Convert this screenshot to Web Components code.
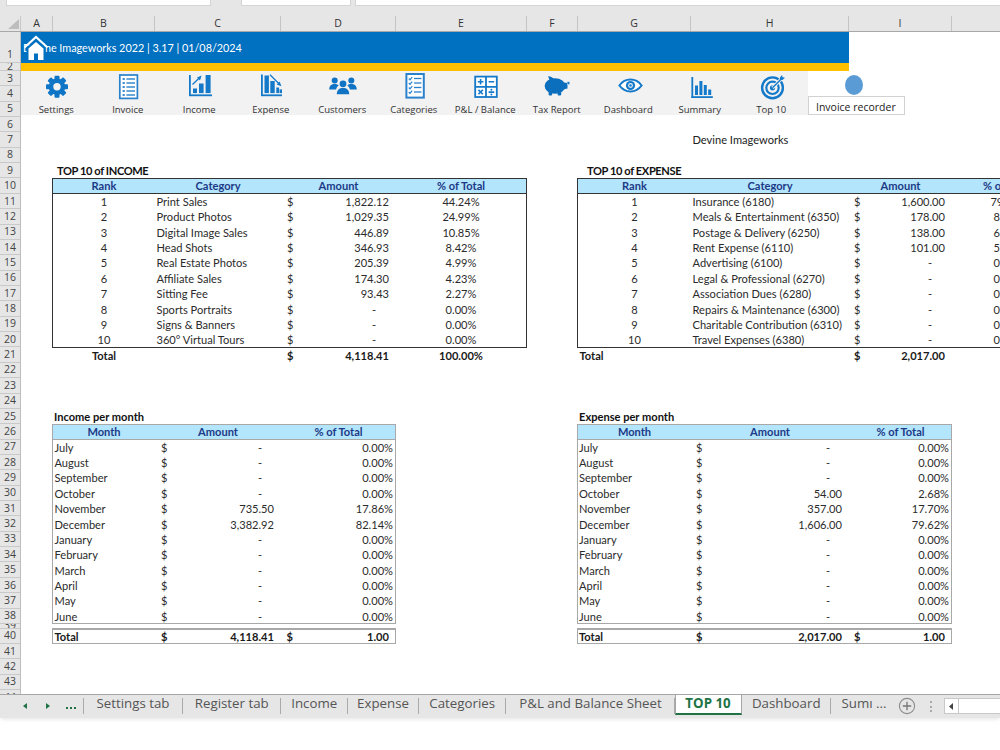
<!DOCTYPE html>
<html lang="en"><head><meta charset="utf-8"><title>TOP 10</title>
<style>
html,body{margin:0;padding:0;background:#fff;overflow:hidden}
</style></head><body>
<x-app>
  <x-formula-bar></x-formula-bar>
  <x-col-headers></x-col-headers>
  <x-sheet id="sheet">
    <x-banner style="grid-row:1;grid-column:1/9">Devine Imageworks 2022 | 3.17 | 01/08/2024</x-banner>
    <x-stripe style="grid-row:2;grid-column:1/9"></x-stripe>
    <x-toolbar style="grid-row:3/6;grid-column:1/-1"></x-toolbar>
    <x-note style="grid-row:7;grid-column:8;padding-left:1.5px">Devine Imageworks</x-note>
    <x-note bold caps style="grid-row:9;grid-column:2/4;padding-left:4px">TOP 10 of INCOME</x-note>
    <x-note bold caps style="grid-row:9;grid-column:7/9;padding-left:9px">TOP 10 of EXPENSE</x-note>
    <x-note bold style="grid-row:25;grid-column:2/4;padding-left:1px">Income per month</x-note>
    <x-note bold style="grid-row:25;grid-column:7/9;padding-left:1px">Expense per month</x-note>
  </x-sheet>
  <x-tabs></x-tabs>
</x-app>
<script>
const FONT = '"Lato","Open Sans",sans-serif';
const UI = '"Open Sans","Noto Sans",sans-serif';
const COLW = [32,102,126,115,131,51,113,158,103,110];

function shadow(el, html){ el.attachShadow({mode:'open'}).innerHTML = html; }

customElements.define('x-app', class extends HTMLElement{
  constructor(){super();shadow(this,`<style>:host{display:flex;flex-direction:column;width:1000px;height:750px;overflow:hidden;background:#fff;font-family:${FONT}}</style><slot></slot>`);}
});

customElements.define('x-formula-bar', class extends HTMLElement{
  constructor(){super();shadow(this,`<style>
  :host{display:block;height:16px;flex:none;background:#e6e6e6;box-sizing:border-box}
  .w{display:flex;height:5.5px;padding-left:6px;gap:0}
  i{display:block;background:#fff;border:solid #d4d4d4;border-width:0 1px 1px 1px;box-sizing:border-box}
  </style><div class="w"><i style="width:205px"></i><i style="width:110px;margin-left:30px"></i><i style="flex:1;margin-left:4px;border-right:0"></i></div>`);}
});

customElements.define('x-col-headers', class extends HTMLElement{
  constructor(){super();
    const names=['A','B','C','D','E','F','G','H','I',''];
    shadow(this,`<style>
    :host{display:flex;flex:none;height:16px;background:#e6e6e6;border-bottom:1px solid #a8a8a8;box-sizing:border-box;font:10.5px/15.5px ${UI};color:#333;overflow:hidden}
    .corner{width:21px;flex:none;position:relative;box-sizing:border-box;border-right:1px solid #c8c8c8}
    .corner svg{display:block;margin:3px 0 0 8px}
    .c{flex:none;text-align:center;box-sizing:border-box;border-right:1px solid #c4c4c4}
    </style><div class="corner"><svg width="11" height="10"><path d="M11 0V10H0Z" fill="#bdbdbd"/></svg></div>`+
    names.map((n,i)=>`<div class="c" style="width:${COLW[i]}px">${n}</div>`).join(''));}
});

customElements.define('x-sheet', class extends HTMLElement{
  constructor(){super();
    const rows=[[1,31],[2,7.98]];
    for(let r=3;r<=38;r++)rows.push([r,15.36]);
    rows.push([39,4.7]);
    for(let r=40;r<=44;r++)rows.push([r,15.36]);
    const tpl=rows.map(r=>r[1]+'px').join(' ');
    shadow(this,`<style>
    :host{display:flex;flex:none;height:662px;overflow:hidden;background:#fff}
    .heads{width:21px;flex:none;background:#e6e6e6;box-sizing:border-box;border-right:1px solid #bdbdbd;font:10.5px ${UI};color:#444}
    .r{box-sizing:border-box;border-bottom:1px solid #c9c9c9;display:flex;align-items:center;justify-content:center;overflow:hidden;line-height:15px}
    .r.one{align-items:flex-end;line-height:16px}
    .body{flex:none;width:${COLW.reduce((a,b)=>a+b)}px;display:grid;grid-template-columns:${COLW.map(w=>w+'px').join(' ')};grid-template-rows:${tpl};position:relative}
    </style><div class="heads">${rows.map(r=>`<div class="r${r[0]==1?' one':''}" style="height:${r[1]}px">${r[0]}</div>`).join('')}</div><div class="body"><slot></slot></div>`);}
});

customElements.define('x-banner', class extends HTMLElement{
  constructor(){super();shadow(this,`<style>
  :host{display:block;position:relative;background:#0070c0;color:#fff;font:10.8px/31px ${FONT};padding-left:2px;white-space:nowrap}
  svg{position:absolute;left:1.5px;top:2.5px}
  </style><slot></slot><svg width="26" height="26" viewBox="0 0 26 26"><path d="M1.5 12.5 13 2 24.5 12.5" fill="none" stroke="#fff" stroke-width="2.2"/><path d="M3.5 12.5 13 4.5l9.5 8V26h-19z" fill="#0070c0"/><path d="M5.5 13.5 13 7l7.5 6.5V25h-5.5v-6.5h-4V25H5.5z" fill="#fff"/></svg>`);}
});

customElements.define('x-stripe', class extends HTMLElement{
  constructor(){super();shadow(this,`<style>:host{display:block;background:#ffc000}</style>`);}
});

const ICONS={
 settings:`<g fill="#0f75c6"><circle cx="14" cy="14.7" r="8.3"/>${[0,45,90,135,180,225,270,315].map(a=>`<rect x="11.5" y="3.7" width="5" height="5" rx="1" transform="rotate(${a} 14 14.7)"/>`).join('')}</g><circle cx="14" cy="14.7" r="3.7" fill="#f2f2f2"/>`,
 invoice:`<rect x="5.8" y="3" width="17.6" height="23.4" fill="#fff" stroke="#2a82cc" stroke-width="1.7"/><g fill="#2a82cc">${[7,11,15,19,23].map(y=>`<rect x="8.6" y="${y-.9}" width="2.2" height="1.8"/><rect x="12.4" y="${y-.7}" width="8.6" height="1.4"/>`).join('')}</g>`,
 income:`<g fill="#1479c9"><rect x="3" y="3" width="1.8" height="21"/><rect x="3" y="22.4" width="23" height="1.8"/><rect x="7" y="16.5" width="4" height="4.6"/><rect x="13" y="11.5" width="4.6" height="9.6"/><rect x="19.6" y="3" width="5" height="18.1"/></g><path d="M6.5 12.5 13 6.2" stroke="#1479c9" stroke-width="1.3" fill="none"/><path d="M15.6 3.6 14 8.4 11 5.4z" fill="#1479c9"/>`,
 expense:`<g fill="#1479c9"><rect x="4" y="2.5" width="1.8" height="21.5"/><rect x="4" y="22.4" width="21" height="1.8"/><rect x="7.5" y="3.5" width="4.4" height="17.6"/><rect x="13.3" y="9" width="4.4" height="12.1"/><rect x="19.3" y="15.5" width="2.8" height="5.6"/><rect x="22.6" y="17.4" width="2.4" height="3.7"/></g><path d="M13 2.8 22 11.8" stroke="#1479c9" stroke-width="1.3" fill="none"/><path d="M24.4 14.2 19.6 12.6 22.6 9.6z" fill="#1479c9"/>`,
 customers:`<g fill="#1173c4"><circle cx="5.7" cy="8.6" r="3"/><circle cx="22.3" cy="8.6" r="3"/><path d="M.2 17.6c0-4 2.4-5.6 5.5-5.6 1.6 0 3 .4 4 1.4-1.4 1-2.3 2.4-2.6 4.2z"/><path d="M27.8 17.6c0-4-2.4-5.6-5.5-5.6-1.6 0-3 .4-4 1.4 1.4 1 2.3 2.4 2.6 4.2z"/><circle cx="14" cy="11.8" r="3.4"/><path d="M7.8 22.2c0-4.4 2.6-6.3 6.2-6.3s6.2 1.9 6.2 6.3z"/></g>`,
 categories:`<rect x="6.4" y="2" width="17.4" height="23.6" fill="#fff" stroke="#2a82cc" stroke-width="2"/><g fill="none" stroke="#2a82cc">${[6.5,11,15.5,20].map(y=>`<path d="M8.8 ${y}l1.2 1.3 2.2-2.6" stroke-width="1.2"/><path d="M14 ${y}h7.4" stroke-width="1.3"/>`).join('')}</g>`,
 pl:`<rect x="3.2" y="4.6" width="21.6" height="20.4" fill="#fff" stroke="#1479c9" stroke-width="1.8"/><path d="M14 4.6V25M3.2 14.8H24.8" stroke="#1479c9" stroke-width="1.8"/><g stroke="#1479c9" stroke-width="1.6" fill="none"><path d="M5.8 9.7h5.6M8.6 6.9v5.6M16.6 9.7h5.6M6.4 17.9l4.4 4.4M10.8 17.9l-4.4 4.4M16.6 20.1h5.6"/></g><circle cx="19.4" cy="17.8" r="1" fill="#1479c9"/><circle cx="19.4" cy="22.4" r="1" fill="#1479c9"/>`,
 piggy:`<g fill="#0b6fbd"><ellipse cx="12" cy="14" rx="10.4" ry="7.8"/><path d="M5 4.2c3 .2 5 1.5 6.4 3L6.8 10C6.6 8 6 6 5 4.2z"/><rect x="5.6" y="18" width="3.6" height="5.4" rx=".8"/><rect x="14.6" y="18" width="3.6" height="5.4" rx=".8"/><path d="M20 10.4 24.5 11v5.4l-4.5 1z"/></g><path d="M24 9.4h3l-.4 3.6h-2.6z" fill="#a9cce8"/><circle cx="25.4" cy="11" r="1" fill="#0b6fbd"/>`,
 eye:`<path d="M4.4 13.5C7.4 9.4 11.3 7.6 15.5 7.6s8.1 1.8 11.1 5.9c-3 4.1-6.9 5.9-11.1 5.9S7.4 17.6 4.4 13.5z" fill="#fff" stroke="#1479c9" stroke-width="2"/><circle cx="15.5" cy="13.5" r="4.6" fill="#1479c9"/><circle cx="15.5" cy="13.5" r="2.4" fill="#e8f1f9"/><circle cx="15.5" cy="13.5" r="1.2" fill="#1479c9"/>`,
 summary:`<g fill="#1479c9"><rect x="5.4" y="5" width="1.8" height="21"/><rect x="5.4" y="24.2" width="21.4" height="1.8"/><rect x="9" y="13.5" width="3" height="9.5"/><rect x="13.4" y="9" width="3" height="14"/><rect x="17.8" y="13" width="3" height="10"/><rect x="22.2" y="17.5" width="3" height="5.5"/></g>`,
 target:`<g fill="none" stroke="#1479c9"><circle cx="14.5" cy="15.8" r="10.4" stroke-width="2.4"/><circle cx="14.5" cy="15.8" r="6.2" stroke-width="2.2"/></g><circle cx="14.5" cy="15.8" r="2.6" fill="#1479c9"/><path d="M14.5 15.8 24 6.2" stroke="#f2f2f2" stroke-width="3.2"/><path d="M14.5 15.8 24 6.2" stroke="#1479c9" stroke-width="1.4"/><path d="M22 5.6 24 3l.6 2.2 2.4.6-2.6 2.2-2.6-.2z" fill="#1479c9"/>`
};

customElements.define('x-tool', class extends HTMLElement{
  constructor(){super();
    shadow(this,`<style>
    :host{display:flex;flex-direction:column;align-items:center;width:71.5px;flex:none;font:9.5px/12px ${UI};color:#333;white-space:nowrap}
    svg{display:block;flex:none;margin-bottom:4px}
    </style><svg width="28" height="28" viewBox="0 0 28 28" overflow="visible">${ICONS[this.getAttribute('icon')]}</svg><span style="margin-left:-1px"><slot></slot></span>`);}
});

customElements.define('x-toolbar', class extends HTMLElement{
  constructor(){super();
    const t=[['settings','Settings'],['invoice','Invoice'],['income','Income'],['expense','Expense'],['customers','Customers'],['categories','Categories'],['pl','P&amp;L / Balance'],['piggy','Tax Report'],['eye','Dashboard'],['summary','Summary'],['target','Top 10']];
    shadow(this,`<style>
    :host{display:flex;align-self:start;height:44.5px;position:relative;z-index:1}
    .band{display:flex;background:#f2f2f2;width:786.5px;flex:none;height:44.5px;overflow:hidden;padding-top:1px;box-sizing:border-box}
    .rec{width:98px;flex:none;display:flex;flex-direction:column;align-items:center}
    .dot{width:18px;height:20px;border-radius:50%;background:#5b9bd5;margin-top:4.5px;margin-left:-5px}
    .btn{margin-top:1px;box-sizing:border-box;width:97px;height:19px;border:1px solid #d2d2d2;font:10.5px/20px ${UI};color:#222;background:#fff;padding-left:7px;white-space:nowrap;overflow:hidden}
    </style><div class="band">${t.map(x=>`<x-tool icon="${x[0]}">${x[1]}</x-tool>`).join('')}</div>
    <div class="rec"><div class="dot"></div><div class="btn">Invoice recorder</div></div>`);}
});

customElements.define('x-note', class extends HTMLElement{
  constructor(){super();shadow(this,`<style>
  :host{display:block;font:11.1px/15.36px ${FONT};color:#222;white-space:nowrap}
  :host([bold]){font-weight:700;color:#111}
  :host([caps]){letter-spacing:-.4px}
  </style><slot></slot>`);}
});

customElements.define('x-table', class extends HTMLElement{
  constructor(){super();shadow(this,`<style>
  :host{display:block;position:relative;min-width:0}
  .frame{position:absolute;top:-.5px;bottom:-.5px;left:-1px;right:0;border:1px solid #333;pointer-events:none;z-index:1}
  :host([grey]) .frame{border-color:#a8a8a8}
  :host([open]) .frame{right:-6px}
  :host([thick]) .frame{border-top-width:2px}
  </style><slot></slot><div class="frame"></div>`);}
});

customElements.define('x-row', class extends HTMLElement{
  constructor(){super();shadow(this,`<style>
  :host{display:grid;grid-template-columns:var(--cols);align-items:center;height:15.36px;box-sizing:border-box;font:11.1px/15px ${FONT};color:#2b2b2b;white-space:nowrap}
  :host([head]){grid-template-columns:var(--hcols);background:#b3e5fc;color:#1c3a86;font-weight:700;border-bottom:1px solid var(--hb,#333)}
  :host([total]){font-weight:700;color:#1a1a1a}
  </style><slot></slot>`);}
});

customElements.define('x-cell', class extends HTMLElement{
  constructor(){super();shadow(this,`<style>
  :host{display:block;box-sizing:border-box;text-align:left;padding:0 var(--pr,0) 0 var(--pl,0);min-width:0}
  :host([a=c]){text-align:center}
  :host([a=r]){text-align:right}
  </style><slot></slot>`);}
});

const sheet=document.getElementById('sheet');
const esc=s=>String(s).replace(/&/g,'&amp;');
function cell(c){ // [text, align, pl, pr]
  const [t,a='l',pl=0,pr=0]=c;
  return `<x-cell a="${a}" style="--pl:${pl}px;--pr:${pr}px">${esc(t)}</x-cell>`;
}
function row(cells,attr=''){return `<x-row ${attr}>${cells.map(cell).join('')}</x-row>`;}
function place(tag,style,html,attrs=''){
  const el=document.createElement(tag);
  el.setAttribute('style',style);
  if(attrs)attrs.split(' ').forEach(a=>el.setAttribute(a,''));
  el.innerHTML=html;sheet.appendChild(el);return el;
}
const heads=(l)=>l.map(t=>[t,'c']);

/* TOP 10 of INCOME */
const inc=[['Print Sales','1,822.12','44.24%'],['Product Photos','1,029.35','24.99%'],['Digital Image Sales','446.89','10.85%'],['Head Shots','346.93','8.42%'],['Real Estate Photos','205.39','4.99%'],['Affiliate Sales','174.30','4.23%'],['Sitting Fee','93.43','2.27%'],['Sports Portraits','-','0.00%'],['Signs & Banners','-','0.00%'],['360° Virtual Tours','-','0.00%']];
const c1='102px 126px 17px 91px 144px';
place('x-table',`grid-row:10/21;grid-column:2/6;--cols:${c1};--hcols:102px 126px 115px 130px`,
  row(heads(['Rank','Category','Amount','% of Total']),'head')+
  inc.map((r,i)=>row([[i+1,'c'],[r[0],'l',1.5],['$','l',6],[r[1],'r',0,r[1]=='-'?13:0],[r[2],'c']])).join(''));
place('x-row',`grid-row:21;grid-column:2/6;--cols:${c1}`,[['Total','c'],[''],['$','l',6],['4,118.41','r'],['100.00%','c']].map(cell).join(''),'total');

/* TOP 10 of EXPENSE */
const exp=[['Insurance (6180)','1,600.00','79.33%'],['Meals & Entertainment (6350)','178.00','8.83%'],['Postage & Delivery (6250)','138.00','6.84%'],['Rent Expense (6110)','101.00','5.01%'],['Advertising (6100)','-','0.00%'],['Legal & Professional (6270)','-','0.00%'],['Association Dues (6280)','-','0.00%'],['Repairs & Maintenance (6300)','-','0.00%'],['Charitable Contribution (6310)','-','0.00%'],['Travel Expenses (6380)','-','0.00%']];
const c2='113px 158px 17px 79px 128px';
place('x-table',`grid-row:10/21;grid-column:7/11;--cols:${c2};--hcols:113px 158px 103px 110px`,
  row(heads(['Rank','Category','Amount','% of Total']),'head')+
  exp.map((r,i)=>row([[i+1,'c'],[r[0],'l',1.5],['$','l',5],[r[1],'r',0,r[1]=='-'?13:0],[r[2],'c']])).join(''),'open');
place('x-row',`grid-row:21;grid-column:7/11;--cols:${c2}`,[['Total','l',1.5],[''],['$','l',5],['2,017.00','r']].map(cell).join(''),'total');

/* per month */
const months=['July','August','September','October','November','December','January','February','March','April','May','June'];
const mInc={4:['735.50','17.86%'],5:['3,382.92','82.14%']};
const mExp={3:['54.00','2.68%'],4:['357.00','17.70%'],5:['1,606.00','79.62%']};
function monthly(col,hcols,cols,data,pl,dl){
  return place('x-table',`grid-row:26/39;grid-column:${col};--cols:${cols};--hcols:${hcols};--hb:#a8a8a8`,
    row(heads(['Month','Amount','% of Total']),'head')+
    months.map((m,i)=>{const d=data[i]||['-','0.00%'];return row([[m,'l',pl],['$','l',dl],[d[0],'r',0,d[0]=='-'?12:0],[d[1],'r']]);}).join(''),'grey');
}
monthly('2/5','102px 126px 115px','102px 20px 99px 119px',mInc,1.5,6);
monthly('7/10','113px 158px 103px','113px 20px 131px 107px',mExp,1,5);
place('x-table','grid-row:40;grid-column:2/5;--cols:102px 20px 99px 19px 96px',
  row([['Total','l',1.5],['$','l',6],['4,118.41','r'],['$','l',12.5],['1.00','r']],'total'),'grey thick');
place('x-table','grid-row:40;grid-column:7/10;--cols:113px 20px 131px 20px 83px',
  row([['Total','l',1],['$','l',5],['2,017.00','r'],['$','l',12],['1.00','r']],'total'),'grey thick');

customElements.define('x-tabs', class extends HTMLElement{
  constructor(){super();
    const tabs=[['Settings tab',99],['Register tab',98.5],['Income',66.5],['Expense',71],['Categories',87.5],['P&amp;L and Balance Sheet',169]];
    shadow(this,`<style>
    :host{display:flex;flex:none;height:23px;background:#e6e6e6;border-top:1px solid #a6a6a6;box-sizing:content-box;font:13.3px/16px ${UI};color:#555;position:relative;white-space:nowrap;box-shadow:0 3px 3px -1px #ececec}
    .nav{width:83.5px;flex:none;display:flex;align-items:center;height:21px;position:relative}
    .nav svg{display:block;margin-top:-2px}
    .t{flex:none;text-align:center;height:21px;position:relative;box-sizing:border-box}
    .t::after{content:"";position:absolute;right:0;top:3px;bottom:2px;width:1px;background:#aaa}
    .nav::after{content:"";position:absolute;right:0;top:3px;bottom:2px;width:1px;background:#aaa}
    .active{background:#fff;color:#217346;font-weight:700;margin-left:-.5px;border:solid #a6a6a6;border-width:0 1px;border-bottom:2px solid #217346;line-height:16px;height:20px;z-index:1}
    .active::after{display:none}
    .none::after{display:none}
    .sum{width:60px;text-align:left;padding-left:10.5px;box-sizing:border-box;overflow:hidden}
    .plus{flex:none;display:block;margin:2px 0 0 7px}
    .dots{flex:none;width:3px;margin:6px 0 0 14px;height:11px;display:flex;flex-direction:column;justify-content:space-between}
    .dots i{display:block;width:2px;height:2px;background:#aaa}
    .scroll{flex:none;display:flex;height:16px;margin:3px 0 0 11px;width:70px}
    .scroll div{background:#fff;border:1px solid #c8c8c8;box-sizing:border-box}
    .scroll .a{width:15px;display:flex;align-items:center;justify-content:center}
    .scroll .b{flex:1;border-left:0;border-right:0}
    </style>
    <div class="nav">
      <svg width="83" height="21"><path d="M27 9v6l-4-3z" fill="#217346"/><path d="M46 9v6l4-3z" fill="#217346"/><g fill="#217346"><rect x="66" y="13" width="2" height="2"/><rect x="70" y="13" width="2" height="2"/><rect x="74" y="13" width="2" height="2"/></g></svg>
    </div>
    ${tabs.map(t=>`<div class="t" style="width:${t[1]}px">${t[0]}</div>`).join('')}
    <div class="t active" style="width:67px">TOP 10</div>
    <div class="t" style="width:89.5px">Dashboard</div>
    <div class="t none sum">Sumı ...</div>
    <svg class="plus" width="18" height="18" viewBox="0 0 18 18"><circle cx="9" cy="9" r="7.6" fill="none" stroke="#8c8c8c" stroke-width="1.1"/><path d="M9 4.8v8.4M4.8 9h8.4" stroke="#777" stroke-width="1.3"/></svg>
    <div class="dots"><i></i><i></i><i></i></div>
    <div class="scroll"><div class="a"><svg width="5" height="7"><path d="M4 0v7L0 3.500z" fill="#444"/></svg></div><div class="b"></div></div>`);}
});
</script>
</body></html>
